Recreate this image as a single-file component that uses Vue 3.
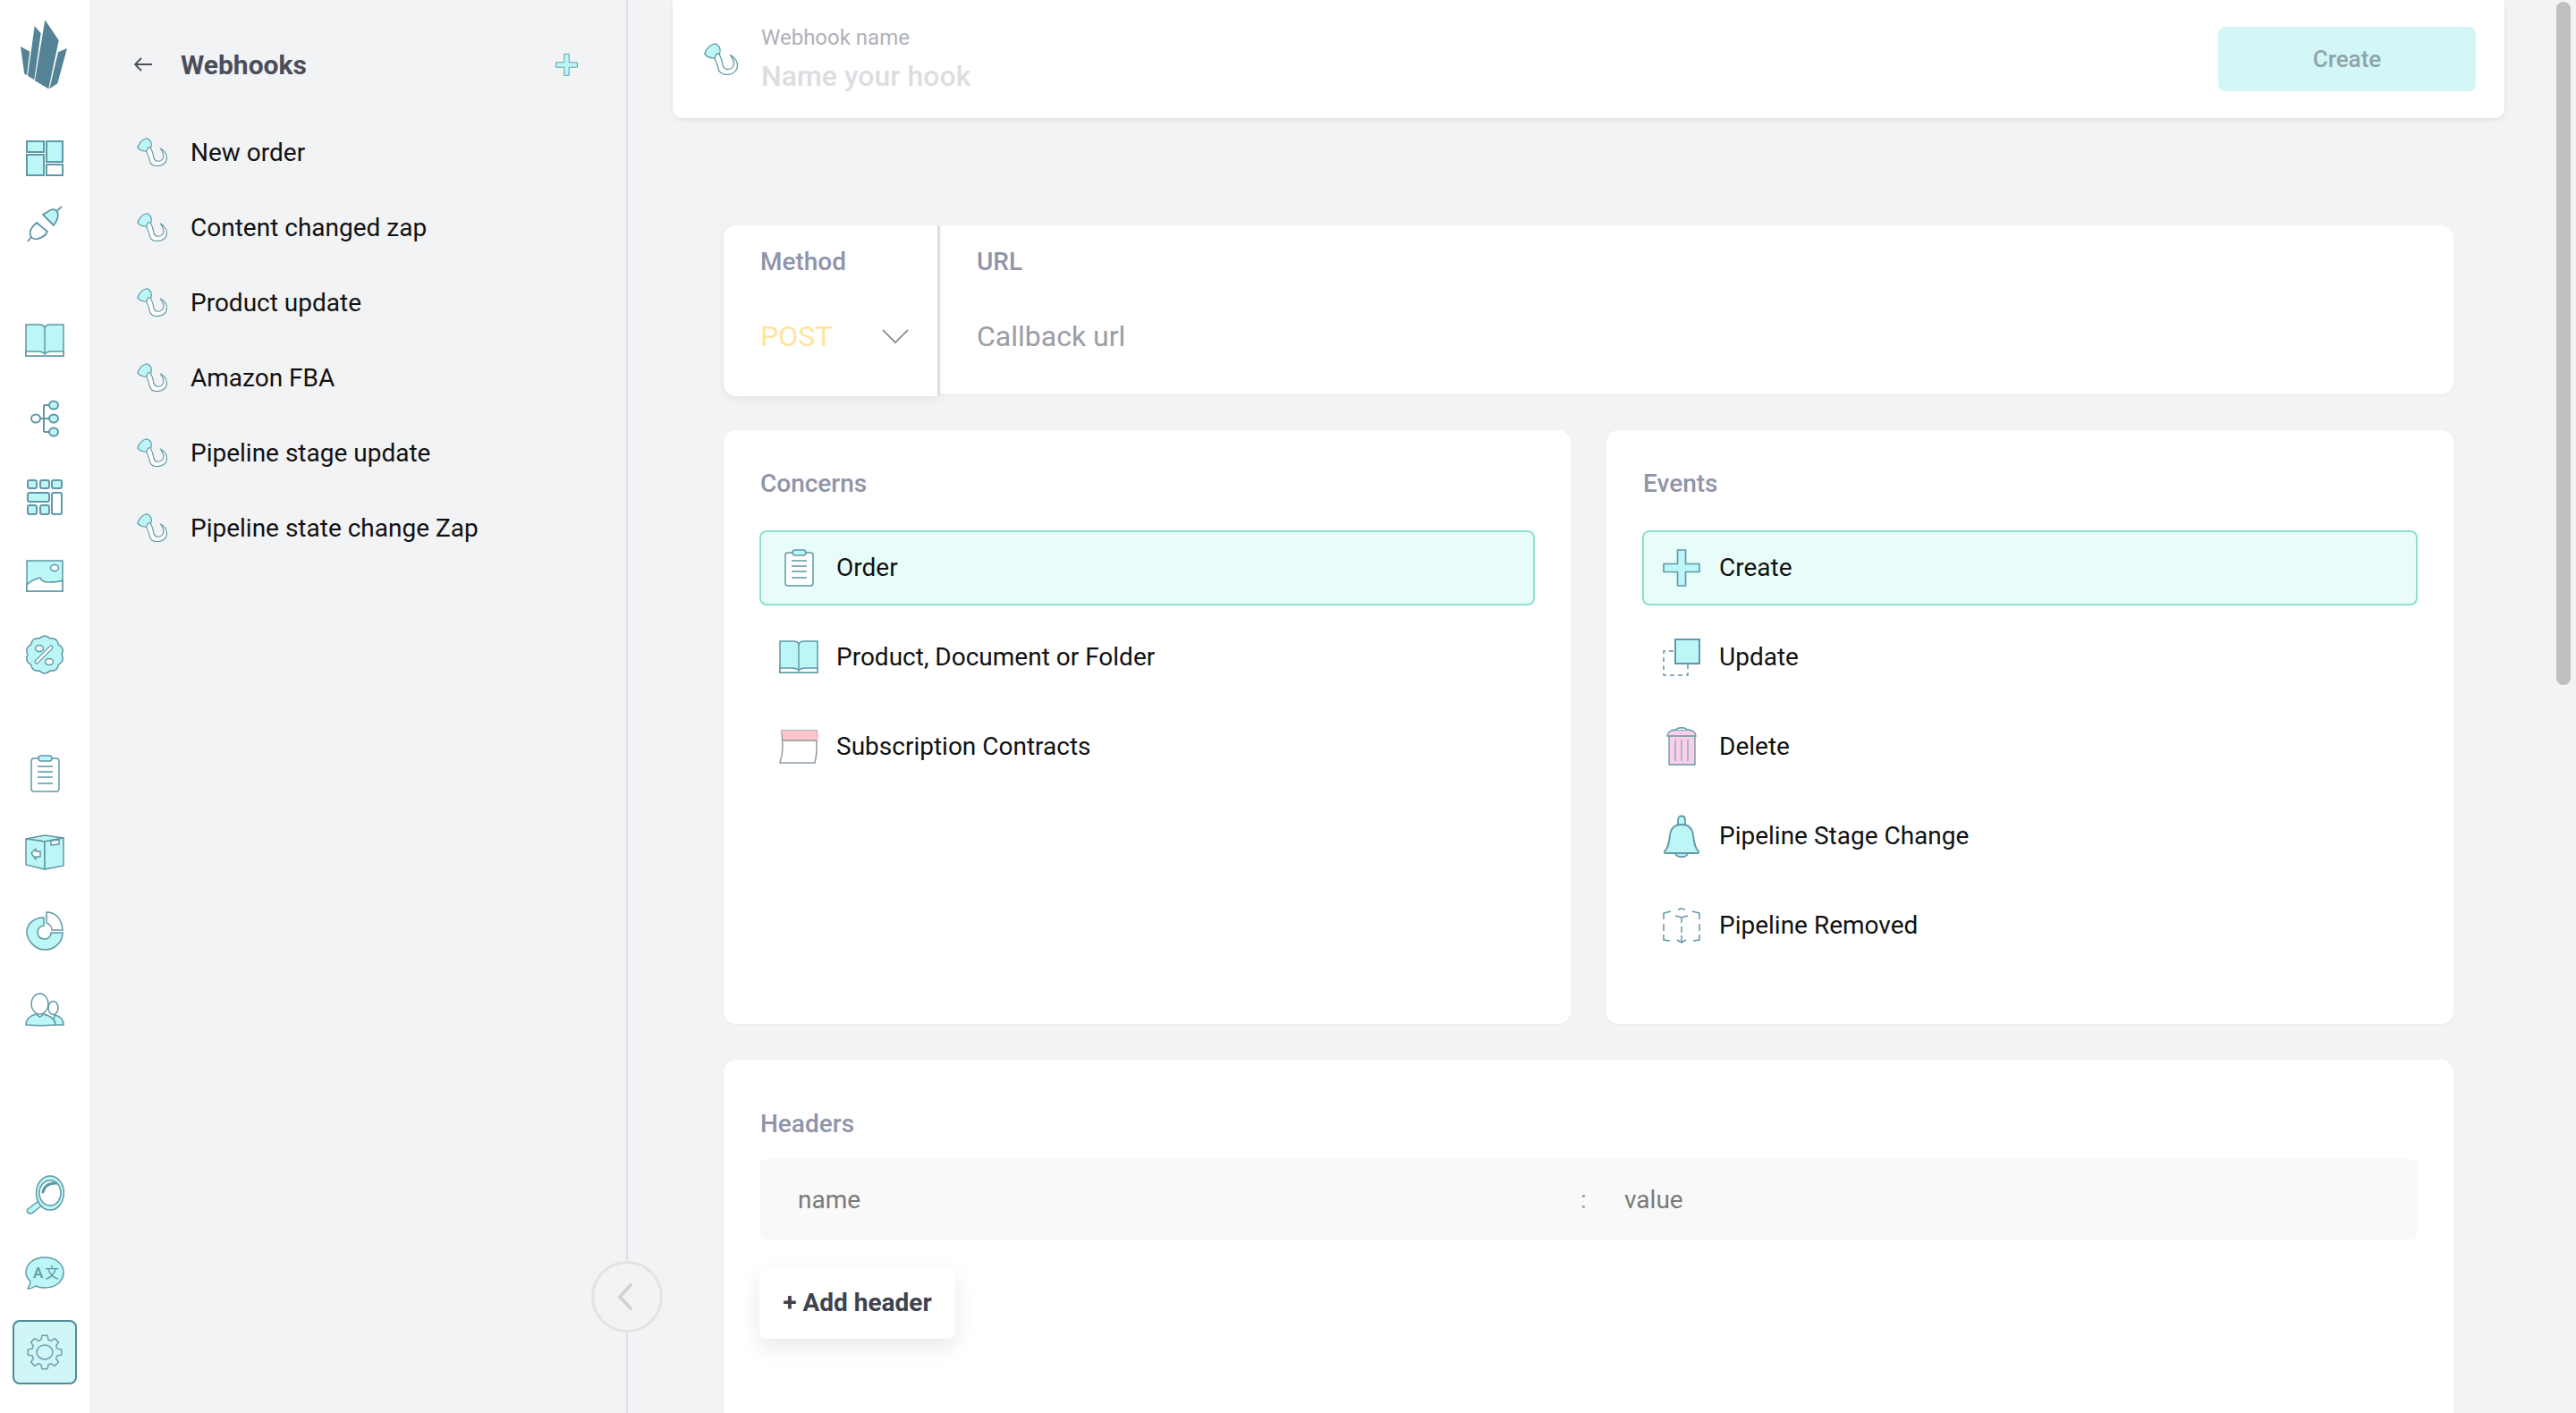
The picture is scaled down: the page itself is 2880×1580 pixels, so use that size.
<script setup>
import { computed } from 'vue';

const railGroups = [
  {
    cls: 'rail-group-a',
    items: [
      { icon: 'i-dash', w: 42, h: 40 },
      { icon: 'i-plug', w: 40, h: 42 },
    ],
  },
  {
    cls: 'rail-group-b',
    items: [
      { icon: 'i-book', w: 44, h: 37 },
      { icon: 'i-tree', w: 32, h: 42 },
      { icon: 'i-grid', w: 40, h: 40 },
      { icon: 'i-image', w: 42, h: 36 },
      { icon: 'i-percent', w: 44, h: 44 },
    ],
  },
  {
    cls: 'rail-group-c',
    items: [
      { icon: 'i-clip', w: 33, h: 42 },
      { icon: 'i-box', w: 44, h: 40 },
      { icon: 'i-pie', w: 42, h: 44 },
      { icon: 'i-users', w: 44, h: 38 },
    ],
  },
];

const hooks = [
  'New order',
  'Content changed zap',
  'Product update',
  'Amazon FBA',
  'Pipeline stage update',
  'Pipeline state change Zap',
];

const concerns = [
  { label: 'Order', icon: 'i-clip', w: 33, h: 42, active: true },
  { label: 'Product, Document or Folder', icon: 'i-book', w: 44, h: 37 },
  { label: 'Subscription Contracts', icon: 'i-calendar', w: 44, h: 38 },
];

const events = [
  { label: 'Create', icon: 'i-plus', w: 42, h: 42, active: true },
  { label: 'Update', icon: 'i-update', w: 42, h: 42 },
  { label: 'Delete', icon: 'i-trash', w: 34, h: 43 },
  { label: 'Pipeline Stage Change', icon: 'i-bell', w: 40, h: 48 },
  { label: 'Pipeline Removed', icon: 'i-dashed', w: 42, h: 40 },
];

// wavy outline used by the discount badge
const wavy = (cx, cy, outer, inner, n) => {
  let d = '';
  for (let i = 0; i < n; i++) {
    const a = (i / n) * Math.PI * 2;
    const b = ((i + 0.5) / n) * Math.PI * 2;
    const c = ((i + 1) / n) * Math.PI * 2;
    const p = (r, t) => `${(cx + r * Math.cos(t)).toFixed(1)} ${(cy + r * Math.sin(t)).toFixed(1)}`;
    if (i === 0) d += `M${p(inner, a)}`;
    d += `Q${p(outer * 1.08, b)} ${p(inner, c)}`;
  }
  return d + 'Z';
};

const badgePath = computed(() => wavy(22, 22, 22, 19, 10));

const cogPath = computed(() => {
  const n = 8;
  const cx = 20;
  const cy = 20;
  const pts = [];
  for (let i = 0; i < n; i++) {
    const t = (i / n) * Math.PI * 2;
    const w = 0.2;
    const add = (r, a) => pts.push(`${(cx + r * Math.cos(a)).toFixed(1)} ${(cy + r * Math.sin(a)).toFixed(1)}`);
    add(14.5, t - w * 1.4);
    add(19, t - w * 0.8);
    add(19, t + w * 0.8);
    add(14.5, t + w * 1.4);
  }
  return `M${pts.join('L')}Z`;
});
</script>

<template>
  <svg class="sprites" aria-hidden="true">
    <symbol id="i-hook" viewBox="0 0 38 36" fill="#bdf6f6" stroke="#5f98a6" stroke-width="1.300">
      <path d="M12 .8C6 2 2 8 .8 12.500 3 15 8 17.200 12.500 17.200 18 16 19 9 17.500 5 16 2.500 14 1 12 .8z" stroke-linejoin="round" />
      <path d="M12 17c1 4 4 8 4 12 1 4 5 6.500 9.500 6.500C33 35.500 38 31 37.500 24 37 20 34 16 29.500 13.500 32 17 34 20 33.500 24 33 27 30 29.500 26 29.500 22 29.500 21 26 20.500 22 20 18 18 15 17 12.500 15 11 13 13 12 17z" fill="#fff" stroke-linejoin="round" />
    </symbol>
    <symbol id="i-plus" viewBox="0 0 42 42" fill="#bdf6f6" stroke="#5f98a6" stroke-width="1.600">
      <path d="M16.500 1h9v15.500h15.500v9H25.500V41h-9V25.500H1v-9h15.500z" stroke-linejoin="round" />
    </symbol>
    <symbol id="i-dash" viewBox="0 0 42 40" fill="#bdf6f6" stroke="#5f98a6" stroke-width="2">
      <rect x="1" y="1" width="19" height="12" />
      <rect x="1" y="16" width="19" height="23" />
      <rect x="23" y="1" width="18" height="23" />
      <rect x="23" y="27" width="18" height="12" fill="#fff" />
    </symbol>
    <symbol id="i-plug" viewBox="0 0 40 42" fill="#bdf6f6" stroke="#5f98a6" stroke-width="1.800">
      <path d="M18 10 27 4.500C30 3.500 33 5 34.500 8 35.500 12 33 18 30 22z" stroke-linejoin="round" />
      <path d="M33.500 6 39 1" fill="none" />
      <path d="M11 19 23 29C21 33 17 36 12 37 8 38 5 36 4 33 2.500 28 6 23 11 19z" fill="#fff" stroke-linejoin="round" />
      <path d="M5 35 1 40" fill="none" />
    </symbol>
    <symbol id="i-book" viewBox="0 0 44 37" fill="#bdf6f6" stroke="#5f98a6" stroke-width="1.500">
      <path d="M1 1h15c3 0 5 1 6 3 1-2 3-3 6-3h15v35H1z" />
      <path d="M1 31h13c4 0 7 1 8 3 1-2 4-3 8-3h13v5H1z" fill="#fff" />
      <path d="M22 4v30" fill="none" />
    </symbol>
    <symbol id="i-tree" viewBox="0 0 32 42" fill="#bdf6f6" stroke="#5f98a6" stroke-width="2">
      <path d="M10 21h17M15 6v30M15 6h7M15 36h7" fill="none" />
      <ellipse cx="6" cy="21" rx="5" ry="4.500" fill="#fff" />
      <ellipse cx="26" cy="6" rx="5" ry="4.500" />
      <ellipse cx="26" cy="21" rx="5" ry="4.500" />
      <ellipse cx="26" cy="36" rx="5" ry="4.500" />
    </symbol>
    <symbol id="i-grid" viewBox="0 0 40 40" fill="#bdf6f6" stroke="#5f98a6" stroke-width="2">
      <rect x="1" y="1" width="10" height="9" rx="2" />
      <rect x="15" y="1" width="10" height="9" rx="2" />
      <rect x="28" y="1" width="11" height="9" rx="2" />
      <rect x="1" y="15" width="24" height="10" rx="2" />
      <rect x="28" y="15" width="11" height="24" rx="2" fill="#fff" />
      <rect x="1" y="29" width="10" height="10" rx="2" />
      <rect x="15" y="29" width="10" height="10" rx="2" />
    </symbol>
    <symbol id="i-image" viewBox="0 0 42 36" fill="#bdf6f6" stroke="#5f98a6" stroke-width="1.500">
      <rect x="1" y="1" width="40" height="34" />
      <path d="M1 28c5-5 10-7 15-8 1 3 4 5 9 5 6 0 11 0 16-2v12H1z" fill="#fff" />
      <ellipse cx="32" cy="9" rx="4.500" ry="3.500" fill="#fff" />
    </symbol>
    <symbol id="i-percent" viewBox="0 0 44 44" fill="#bdf6f6" stroke="#5f98a6" stroke-width="1.500">
      <path :d="badgePath" />
      <ellipse cx="16" cy="15" rx="4.500" ry="3.500" fill="#fff" />
      <ellipse cx="27" cy="30" rx="4.500" ry="3.500" fill="#fff" />
      <path d="M13 30 29 14" stroke-width="5" stroke-linecap="round" />
      <path d="M13 30 29 14" stroke="#fff" stroke-width="2.600" stroke-linecap="round" />
    </symbol>
    <symbol id="i-clip" viewBox="0 0 33 42" fill="#fff" stroke="#5f98a6" stroke-width="1.500">
      <rect x="1" y="4" width="31" height="37" rx="3" />
      <rect x="9" y="1" width="15" height="6" rx="3" fill="#bdf6f6" />
      <path d="M8 13h17M8 19h17M8 25h17M8 32h17" fill="none" stroke-width="1.300" />
    </symbol>
    <symbol id="i-box" viewBox="0 0 44 40" fill="#bdf6f6" stroke="#5f98a6" stroke-width="1.500">
      <path d="M1 5 22 1l21 3-21 4z" />
      <path d="M1 5l21 3v31L1 34z" />
      <path d="M43 4 22 8v31l21-4z" />
      <path d="M29 7l9-1v5l-9 1z" fill="#fff" />
      <path d="M7 21l5-5v3h5v6h-5v3z" fill="#fff" stroke-linejoin="round" />
    </symbol>
    <symbol id="i-pie" viewBox="0 0 42 44" fill="#bdf6f6" stroke="#5f98a6" stroke-width="1.500">
      <path d="M20 7C9 7 1 14 1 23s9 20 20 20 20-8 20-19H28c0 4-3 7-7 7-5 0-8-3-8-8 0-3 3-7 7-7z" />
      <path d="M23 1c9 0 17 6 18 20H29c0-4-3-7-6-8z" fill="#fff" stroke-linejoin="round" />
    </symbol>
    <symbol id="i-users" viewBox="0 0 44 38" fill="#bdf6f6" stroke="#5f98a6" stroke-width="1.500">
      <path d="M33 25c5 1 10 4 10 11H31z" />
      <ellipse cx="31.500" cy="17" rx="5.500" ry="7.500" fill="#fff" />
      <path d="M1 36c0-6 4-10 11-12l4.500 3 4.500-3c7 2 13 6 13 12-10 1-23 1-33 0z" />
      <ellipse cx="16.500" cy="12.500" rx="9.500" ry="11.500" fill="#fff" />
    </symbol>
    <symbol id="i-search" viewBox="0 0 44 44" fill="#bdf6f6" stroke="#5f98a6" stroke-width="1.500">
      <path d="M15 29 3 38c-2 2 0 5 3 5 2 0 3-1 4-2l10-8" stroke-linejoin="round" />
      <ellipse cx="28" cy="20" rx="15.500" ry="19" />
      <ellipse cx="28" cy="20" rx="12" ry="14" fill="#fff" />
      <path d="M20 19c1-6 6-10 15-10" fill="none" stroke-width="3" stroke-linecap="round" />
    </symbol>
    <symbol id="i-cog" viewBox="0 0 40 40" fill="none" stroke="#6aa3b0" stroke-width="1.500">
      <path :d="cogPath" stroke-linejoin="round" />
      <ellipse cx="20" cy="20" rx="9" ry="8" />
    </symbol>
    <symbol id="i-calendar" viewBox="0 0 44 38" fill="#fff" stroke="#8d9aa3" stroke-width="1.500">
      <path d="M3 1h39c1 4 1 8 0 12l0 10c0 5-1 10-2 14H1c2-6 3-12 3-18z" />
      <path d="M3 1h39c1 3 1 7 1 12H4c0-4 0-8-1-12z" fill="#fdc5cb" stroke="none" />
      <path d="M3 12h40" fill="none" />
    </symbol>
    <symbol id="i-update" viewBox="0 0 42 42" fill="none" stroke="#5f98a6" stroke-width="1.500">
      <path d="M12 14H1v27h27V28" stroke-dasharray="5 4" />
      <rect x="14" y="1" width="27" height="27" fill="#bdf6f6" stroke-width="2" />
    </symbol>
    <symbol id="i-trash" viewBox="0 0 34 43" fill="#fccfe9" stroke="#5f98a6" stroke-width="1.300">
      <path d="M3 9h29v33H3z" />
      <path d="M1 10c0-4 4-7 9-7h14c5 0 9 3 9 7z" />
      <path d="M11 3c1-3 11-3 12 0" fill="#fff" />
      <path d="M10 14v24M17 14v24M24 14v24" fill="none" stroke-width="1" />
    </symbol>
    <symbol id="i-bell" viewBox="0 0 40 48" fill="#bdf6f6" stroke="#5f98a6" stroke-width="1.800">
      <path d="M16 11V6c0-6 8-6 8 0v5" />
      <path d="M13 42c0 7 14 7 14 0" />
      <path d="M1 41c4-4 5-9 6-18 1-8 6-12 13-12s12 4 13 12c1 9 2 14 6 18 1 1 0 2-1 2H2c-1 0-2-1-1-2z" stroke-linejoin="round" />
    </symbol>
    <symbol id="i-dashed" viewBox="0 0 42 40" fill="none" stroke="#5f98a6" stroke-width="1.500">
      <path d="M9 4 1 6v7M1 18v8M1 30v6l7 1M33 4l8 2v7M41 18v8M41 30v6l-7 1" />
      <path d="M17 2l4-1 4 1M14 9l7 2 7-2M21 11v6M21 21v7M21 31v8M16 36l5 3 5-3" />
    </symbol>
  </svg>

  <div class="app">
    <nav class="rail">
      <svg class="logo" width="54" height="80" viewBox="0 0 54 80" fill="#538394">
        <path d="M0 31 10.300 36.700 7 63 4.300 61.700z" />
        <path d="M15.700 8 22.700 16.300 15.300 68.300 8 63.700z" />
        <path d="M27.300 1.300 42.700 24 31.300 78.300 16 69.300z" />
        <path d="M52 33 42 37.300 32.300 78.300 41.300 72.300z" />
      </svg>

      <div v-for="group in railGroups" :key="group.cls" class="rail-group" :class="group.cls">
        <div v-for="item in group.items" :key="item.icon" class="rail-item">
          <svg :width="item.w" :height="item.h"><use :href="'#' + item.icon" /></svg>
        </div>
      </div>

      <div class="rail-group rail-group-bottom">
        <div class="rail-item">
          <svg width="44" height="44"><use href="#i-search" /></svg>
        </div>
        <div class="rail-item">
          <svg width="44" height="38" viewBox="0 0 44 38" fill="#bdf6f6" stroke="#5f98a6" stroke-width="1.500">
            <path d="M3 36c2-3 3-5 3-8C3 25 1 22 1 18 1 8 10 1 22 1s21 7 21 17-9 17-21 17c-5 0-8-1-10-2-3 2-6 3-9 3z" stroke-linejoin="round" />
            <text x="9" y="24" font-family="Roboto, sans-serif" font-size="17" font-weight="500" fill="#5f98a6" stroke="none">A</text>
            <text x="22" y="24" font-family="'Noto Sans CJK SC', sans-serif" font-size="16" fill="#5f98a6" stroke="none">文</text>
          </svg>
        </div>
        <div class="rail-item">
          <div class="rail-active">
            <svg width="40" height="40"><use href="#i-cog" /></svg>
          </div>
        </div>
      </div>
    </nav>

    <aside class="sidebar">
      <header class="sidebar-head">
        <svg class="back" width="20" height="16" viewBox="0 0 20 16" fill="none" stroke="#4b4e5a" stroke-width="1.800">
          <path d="M20 8H1M8 1 1 8l7 7" />
        </svg>
        <h1>Webhooks</h1>
        <svg class="head-plus" width="25" height="25"><use href="#i-plus" /></svg>
      </header>
      <ul class="hook-list">
        <li v-for="hook in hooks" :key="hook">
          <svg width="34" height="32"><use href="#i-hook" /></svg>
          <span>{{ hook }}</span>
        </li>
      </ul>
      <button class="collapse" type="button">
        <svg width="18" height="30" viewBox="0 0 18 30" fill="none" stroke="#d0d2d4" stroke-width="4" stroke-linecap="round">
          <path d="M15 2 3 15l12 13" />
        </svg>
      </button>
    </aside>

    <main class="main">
      <section class="topbar">
        <svg width="38" height="36"><use href="#i-hook" /></svg>
        <div class="name-field">
          <label>Webhook name</label>
          <div class="name-input">Name your hook</div>
        </div>
        <button class="create-btn" type="button">Create</button>
      </section>

      <div class="form">
        <section class="request">
          <div class="method">
            <div class="field-label">Method</div>
            <div class="method-value">
              <span>POST</span>
              <svg width="30" height="16" viewBox="0 0 30 16" fill="none" stroke="#73767f" stroke-width="1.500">
                <path d="M1 1l14 14L29 1" />
              </svg>
            </div>
          </div>
          <div class="url">
            <div class="field-label">URL</div>
            <div class="url-value">Callback url</div>
          </div>
        </section>

        <div class="columns">
          <section class="card">
            <div class="field-label">Concerns</div>
            <div class="choice-list">
              <div v-for="row in concerns" :key="row.label" class="choice" :class="{ active: row.active }">
                <span class="choice-icon">
                  <svg :width="row.w" :height="row.h"><use :href="'#' + row.icon" /></svg>
                </span>
                {{ row.label }}
              </div>
            </div>
          </section>
          <section class="card">
            <div class="field-label">Events</div>
            <div class="choice-list">
              <div v-for="row in events" :key="row.label" class="choice" :class="{ active: row.active }">
                <span class="choice-icon">
                  <svg :width="row.w" :height="row.h"><use :href="'#' + row.icon" /></svg>
                </span>
                {{ row.label }}
              </div>
            </div>
          </section>
        </div>

        <section class="card headers">
          <div class="field-label">Headers</div>
          <div class="header-row">
            <span class="header-name">name</span>
            <span class="header-sep">:</span>
            <span class="header-value">value</span>
          </div>
          <button class="add-btn" type="button">+ Add header</button>
        </section>
      </div>

      <div class="scroll-thumb"></div>
    </main>
  </div>
</template>

<style scoped>
.sprites {
  position: absolute;
  width: 0;
  height: 0;
}

.app {
  display: flex;
  height: 1580px;
  overflow: hidden;
  background: #f2f3f5;
  font-family: Roboto, sans-serif;
  color: #111;
}

/* icon rail */
.rail {
  display: flex;
  flex-direction: column;
  align-items: center;
  flex: none;
  width: 100px;
  padding: 21px 0 24px;
  box-sizing: border-box;
  background: #fff;
}

.logo {
  flex: none;
}

.rail-group {
  display: flex;
  flex-direction: column;
  width: 100%;
}

.rail-item {
  display: flex;
  align-items: center;
  justify-content: center;
  height: 88px;
}

.rail-group-a {
  margin-top: 39px;
}

.rail-group-a .rail-item {
  height: 74px;
}

.rail-group-b {
  margin-top: 48px;
}

.rail-group-c {
  margin-top: 45px;
}

.rail-group-bottom {
  margin-top: auto;
}

.rail-active {
  display: flex;
  align-items: center;
  justify-content: center;
  width: 72px;
  height: 72px;
  box-sizing: border-box;
  border: 2px solid #4f8a9b;
  border-radius: 8px;
  background: #d0f6f6;
}

/* webhook list */
.sidebar {
  position: relative;
  flex: none;
  width: 602px;
  border-right: 2px solid #dfe0e3;
  box-sizing: border-box;
}

.sidebar-head {
  display: flex;
  align-items: center;
  height: 144px;
  padding: 0 54px 0 50px;
}

.sidebar-head h1 {
  margin: 0 0 0 32px;
  font-size: 30px;
  font-weight: 700;
  color: #4b4e5a;
}

.head-plus {
  margin-left: auto;
}

.back {
  flex: none;
}

.hook-list {
  margin: -16px 0 0;
  padding: 0;
  list-style: none;
}

.hook-list li {
  display: flex;
  align-items: center;
  gap: 26px;
  height: 84px;
  padding-left: 53px;
  font-size: 28px;
}

.collapse {
  position: absolute;
  top: 1410px;
  right: -41px;
  display: flex;
  align-items: center;
  justify-content: center;
  width: 80px;
  height: 80px;
  padding: 0 4px 0 0;
  border: 3px solid #e2e3e5;
  border-radius: 50%;
  background: #f2f3f5;
}

/* main column */
.main {
  position: relative;
  flex: 1;
  min-width: 0;
}

.topbar {
  display: flex;
  align-items: center;
  width: 2048px;
  height: 132px;
  margin-left: 50px;
  padding: 0 32px 0 35px;
  box-sizing: border-box;
  border-radius: 0 0 10px 10px;
  background: #fff;
  box-shadow: 0 2px 6px rgba(0, 0, 0, 0.08);
}

.name-field {
  flex: 1;
  margin-left: 26px;
}

.name-field label {
  display: block;
  font-size: 24px;
  line-height: 28px;
  color: #afb0b8;
}

.name-input {
  margin-top: 9px;
  font-size: 32px;
  font-weight: 500;
  line-height: 40px;
  color: #dcdde0;
}

.create-btn {
  width: 288px;
  height: 72px;
  border: 0;
  border-radius: 8px;
  background: #d3f6f7;
  font-family: inherit;
  font-size: 26px;
  font-weight: 500;
  color: #8ea5a8;
}

.form {
  display: flex;
  flex-direction: column;
  gap: 40px;
  width: 1934px;
  margin: 120px 0 0 107px;
}

.field-label {
  font-size: 28px;
  font-weight: 500;
  line-height: 36px;
  color: #8f94a9;
}

.card .field-label {
  margin-left: 1px;
}

.request {
  display: flex;
  height: 189px;
  border-radius: 14px;
  background: #fff;
  box-shadow: 0 1px 3px rgba(0, 0, 0, 0.05);
}

.method {
  flex: none;
  width: 242px;
  height: 191px;
  padding: 23px 32px 0 41px;
  box-sizing: border-box;
  border-right: 3px solid #dfe0e3;
  border-radius: 14px 0 0 14px;
  background: #fff;
  box-shadow: 0 4px 8px rgba(0, 0, 0, 0.05);
}

.method-value {
  display: flex;
  align-items: center;
  justify-content: space-between;
  margin-top: 45px;
  font-size: 32px;
  line-height: 40px;
  color: #ffe49e;
}

.url {
  flex: 1;
  padding: 23px 41px;
}

.url-value {
  margin-top: 45px;
  font-size: 32px;
  line-height: 40px;
  color: #9b9ca6;
}

.columns {
  display: grid;
  grid-template-columns: 1fr 1fr;
  gap: 40px;
}

.card {
  padding: 42px 40px;
  box-sizing: border-box;
  border-radius: 14px;
  background: #fff;
  box-shadow: 0 1px 3px rgba(0, 0, 0, 0.04);
}

.columns .card {
  height: 664px;
}

.choice-list {
  display: flex;
  flex-direction: column;
  gap: 16px;
  margin-top: 34px;
}

.choice {
  display: flex;
  align-items: center;
  gap: 20px;
  height: 84px;
  padding: 0 20px 1px;
  box-sizing: border-box;
  border: 2px solid transparent;
  border-radius: 8px;
  font-size: 28px;
}

.choice.active {
  border-color: #8fe0cf;
  background: #e8fdf9;
}

.choice-icon {
  display: flex;
  align-items: center;
  justify-content: center;
  flex: none;
  width: 44px;
}

.headers {
  height: 600px;
  padding-top: 54px;
}

.header-row {
  display: flex;
  align-items: center;
  height: 90px;
  margin-top: 21px;
  padding-left: 43px;
  border-radius: 8px;
  background: #f9f9f9;
  font-size: 28px;
  color: #7a7a7a;
}

.header-name {
  width: 875px;
}

.header-sep {
  width: 49px;
  color: #999;
}

.add-btn {
  display: block;
  width: 219px;
  height: 81px;
  margin-top: 30px;
  border: 0;
  border-radius: 8px;
  background: #fff;
  box-shadow: 0 10px 24px rgba(0, 0, 0, 0.09);
  font-family: inherit;
  font-size: 28px;
  font-weight: 700;
  color: #3e424e;
}

.scroll-thumb {
  position: absolute;
  top: 2px;
  right: 6px;
  width: 16px;
  height: 764px;
  border-radius: 8px;
  background: #bfbfbf;
}
</style>

<style>
body {
  background: #f2f3f5;
}
</style>
